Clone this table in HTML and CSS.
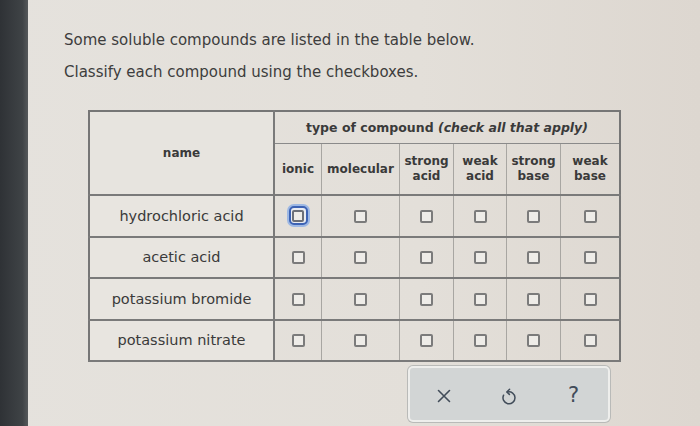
FILE: index.html
```html
<!DOCTYPE html>
<html>
<head>
<meta charset="utf-8">
<link rel="stylesheet" href="styles.css">
</head>
<body>
<div class="screen">
  <div class="bezel"></div>
  <div class="page">
    <p class="intro">Some soluble compounds are listed in the table below.</p>
    <p class="intro second">Classify each compound using the checkboxes.</p>
    <table class="grid">
      <thead>
        <tr>
          <th class="name-h" rowspan="2">name</th>
          <th class="type-h" colspan="6">type of compound <i>(check all that apply)</i></th>
        </tr>
        <tr class="sub">
          <th class="c-ionic">ionic</th>
          <th class="c-mol">molecular</th>
          <th class="c-sa">strong<br>acid</th>
          <th class="c-wa">weak<br>acid</th>
          <th class="c-sb">strong<br>base</th>
          <th class="c-wb">weak<br>base</th>
        </tr>
      </thead>
      <tbody>
        <tr>
          <td class="name">hydrochloric acid</td>
          <td class="chk first"><span class="focus"><span class="box"></span></span></td>
          <td class="chk"><span class="box"></span></td>
          <td class="chk"><span class="box"></span></td>
          <td class="chk"><span class="box"></span></td>
          <td class="chk"><span class="box"></span></td>
          <td class="chk"><span class="box"></span></td>
        </tr>
        <tr>
          <td class="name">acetic acid</td>
          <td class="chk first"><span class="box"></span></td>
          <td class="chk"><span class="box"></span></td>
          <td class="chk"><span class="box"></span></td>
          <td class="chk"><span class="box"></span></td>
          <td class="chk"><span class="box"></span></td>
          <td class="chk"><span class="box"></span></td>
        </tr>
        <tr>
          <td class="name">potassium bromide</td>
          <td class="chk first"><span class="box"></span></td>
          <td class="chk"><span class="box"></span></td>
          <td class="chk"><span class="box"></span></td>
          <td class="chk"><span class="box"></span></td>
          <td class="chk"><span class="box"></span></td>
          <td class="chk"><span class="box"></span></td>
        </tr>
        <tr>
          <td class="name">potassium nitrate</td>
          <td class="chk first"><span class="box"></span></td>
          <td class="chk"><span class="box"></span></td>
          <td class="chk"><span class="box"></span></td>
          <td class="chk"><span class="box"></span></td>
          <td class="chk"><span class="box"></span></td>
          <td class="chk"><span class="box"></span></td>
        </tr>
      </tbody>
    </table>
    <div class="actions">
      <span class="btn">
        <svg width="16" height="16" viewBox="0 0 16 16"><path d="M2.5 2.5 L13.5 13.5 M13.5 2.5 L2.5 13.5" stroke="#414c59" stroke-width="1.6" fill="none" stroke-linecap="round"/></svg>
      </span>
      <span class="btn">
        <svg width="16" height="19" viewBox="0 0 16 19"><path d="M6.5 5 A6 6 0 1 1 2.6 8.2" stroke="#414c59" stroke-width="1.5" fill="none" stroke-linecap="round"/><path d="M8.6 2.2 L5.8 5 L8.4 7.4" stroke="#414c59" stroke-width="1.5" fill="none" stroke-linecap="round" stroke-linejoin="round"/></svg>
      </span>
      <span class="btn help">?</span>
    </div>
  </div>
</div>
</body>
</html>
```

FILE: styles.css
```css
html, body {
  margin: 0;
  padding: 0;
}
body {
  width: 700px;
  height: 426px;
  overflow: hidden;
  background: #e2ded8;
  font-family: "DejaVu Sans", Verdana, sans-serif;
  color: #3b3b3b;
}
.screen {
  display: flex;
  height: 426px;
  background: linear-gradient(90deg, #e5e2dd 0%, #e3dfd9 60%, #ddd7d0 100%);
}
.bezel {
  width: 28px;
  flex: none;
  background: linear-gradient(90deg, #2f3236 0%, #3f4346 80%, #55585a 100%);
}
.page {
  flex: 1;
  padding: 30px 0 0 36px;
}
.intro {
  margin: 0;
  font-size: 15px;
  line-height: 20px;
  color: #3d3d3d;
}
.intro.second {
  margin-top: 12px;
}
.grid {
  margin: 28px 0 0 24px;
  border-collapse: collapse;
  border: 2px solid #767676;
  font-size: 12px;
}
.grid th, .grid td {
  padding: 0;
  text-align: center;
}
.grid th {
  font-weight: bold;
  color: #3a3a3a;
  line-height: 15px;
}
.name-h {
  width: 183px;
  border-right: 2px solid #7a7a7a;
  border-bottom: 2px solid #7a7a7a;
  background: #e7e4df;
}
.type-h {
  height: 31px;
  border-bottom: 1px solid #8a8a8a;
  font-size: 12.5px;
}
.type-h i {
  font-style: italic;
}
.sub th {
  height: 50px;
  border-bottom: 2px solid #7a7a7a;
  border-left: 1px solid #a8a6a2;
}
.sub th.c-ionic {
  border-left: none;
}
.c-ionic { width: 46px; }
.c-mol { width: 77px; }
.c-sa { width: 53px; }
.c-wa { width: 52px; }
.c-sb { width: 53px; }
.c-wb { width: 58px; }
.grid td {
  height: 39.5px;
  border-bottom: 2px solid #7a7a7a;
}
.grid td.name {
  font-size: 14.5px;
  color: #3a3a3a;
  border-right: 2px solid #7a7a7a;
  background: #e8e5e0;
}
.grid td.chk {
  border-left: 1px solid #a8a6a2;
}
.grid td.chk.first {
  border-left: none;
}
.box {
  display: inline-block;
  vertical-align: middle;
  width: 9px;
  height: 9px;
  border: 2px solid #7b7b7b;
  border-radius: 2px;
  background: #eeece8;
}
.focus {
  display: inline-flex;
  align-items: center;
  justify-content: center;
  width: 15px;
  height: 15px;
  border: 2px solid #3d63b4;
  border-radius: 5px;
  box-shadow: 0 0 0 2px #9db8e4;
  background: #e9ecf2;
  vertical-align: middle;
}
.focus .box {
  width: 8px;
  height: 8px;
  border-color: #6b6f78;
}
.actions {
  display: flex;
  justify-content: space-around;
  align-items: center;
  width: 194px;
  height: 52px;
  margin: 4px 0 0 344px;
  padding: 0 2px;
  background: #d2d5d5;
  border: 2px solid #eeeeec;
  border-radius: 5px;
  box-shadow: 0 0 0 1px #b9bab8;
}
.btn {
  width: 40px;
  display: flex;
  justify-content: center;
  align-items: center;
  padding-top: 4px;
}
.help {
  font-family: "DejaVu Sans", sans-serif;
  font-size: 21px;
  color: #414c59;
  padding-top: 2px;
}
```
